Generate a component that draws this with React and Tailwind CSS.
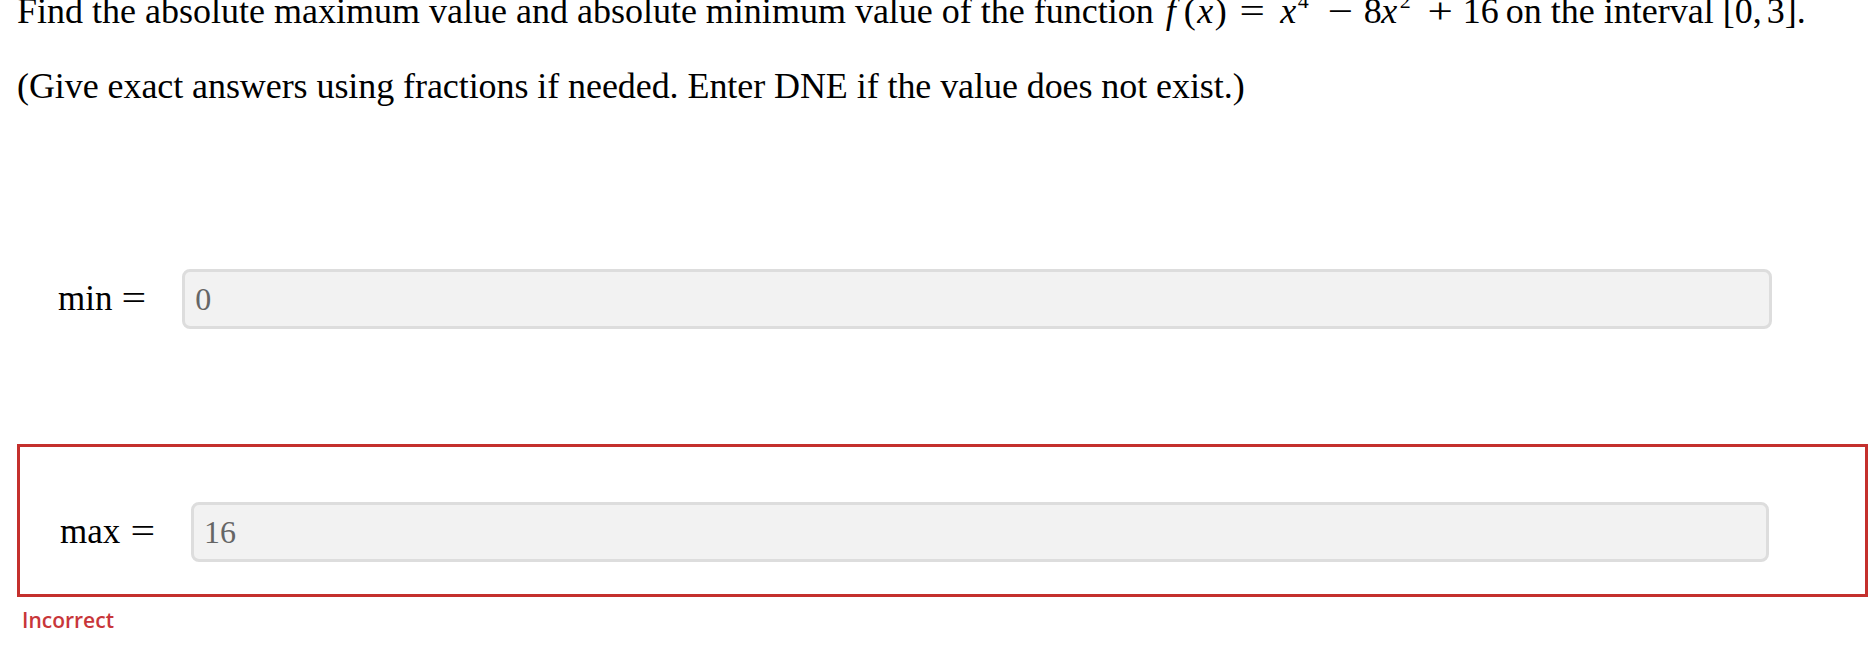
const serif = { fontFamily: '"Liberation Serif", "Times New Roman", serif' };

// one MathJax-like atom: fixed box, glyph centred in it
function Atom({ children, w, italic, op, className = "" }) {
  return (
    <span className={`inline-block text-center ${w} ${italic ? "italic" : ""} ${className}`}>
      {op ? <span className="inline-block scale-x-125">{children}</span> : children}
    </span>
  );
}

function Sup({ children, w, className = "" }) {
  return (
    <span className={`inline-block text-center ${w} ${className}`}>
      <span className="relative -top-[15px] text-[22px]">{children}</span>
    </span>
  );
}

function Field({ label, value, eqGap }) {
  return (
    <div className="flex items-center">
      <span className="text-[35px] leading-[52px] text-black whitespace-nowrap" style={serif}>
        {label}
        <span className={`inline-block scale-x-125 ${eqGap}`}>=</span>
      </span>
      <div className="ml-[38px] flex h-[60px] flex-1 items-center rounded-[8px] border-[3px] border-[#dddddd] bg-[#f2f2f2] px-[10px]">
        <span className="text-[32px] text-[#666666]" style={serif}>{value}</span>
      </div>
    </div>
  );
}

export default function App() {
  return (
    <div className="min-h-[650px] w-[1872px] overflow-hidden bg-white pl-[17px] pr-[4px]">
      {/* ── QUESTION ── */}
      <p className="-mt-[10px] h-[42px] text-[36px] leading-[42px] text-black whitespace-nowrap" style={serif}>
        Find the absolute maximum value and absolute minimum value of the function{" "}
        <span>
          <Atom w="w-[20px]" italic className="pl-[3px] text-left">f</Atom>
          <Atom w="w-[13px]" className="text-right">(</Atom>
          <Atom w="w-[19px]" italic>x</Atom>
          <Atom w="w-[12px]">)</Atom>
          <Atom w="w-[22px]" op className="ml-[14px]">=</Atom>
          <Atom w="w-[19px]" italic className="ml-[16px]">x</Atom>
          <Sup w="w-[11px]">4</Sup>
          <Atom w="w-[22px]" op className="ml-[20px]">−</Atom>
          <Atom w="w-[16px]" className="ml-[13px]">8</Atom>
          <Atom w="w-[19px]" italic>x</Atom>
          <Sup w="w-[10px]" className="ml-[1px]">2</Sup>
          <Atom w="w-[22px]" op className="ml-[19px]">+</Atom>
          <Atom w="w-[27px]" className="ml-[12px] mr-[7px]">16</Atom>
        </span>{" "}
        on the interval{" "}
        <span>
          [0,<span className="ml-[5px]">3</span>]
        </span>
        .
      </p>
      <p className="mt-[33px] h-[42px] text-[36px] leading-[42px] tracking-[-0.07px] text-black whitespace-nowrap" style={serif}>
        (Give exact answers using fractions if needed. Enter DNE if the value does not exist.)
      </p>

      {/* ── MIN ── */}
      <div className="mt-[162px] pl-[41px] pr-[96px]">
        <Field label="min" value="0" eqGap="ml-[12px]" />
      </div>

      {/* ── MAX (incorrect) ── */}
      <div className="mt-[115px] border-[3px] border-[#c4302d] pl-[40px] pr-[96px] pt-[55px] pb-[32px]">
        <Field label="max" value="16" eqGap="ml-[13px]" />
      </div>
      <p
        className="mt-[9px] pl-[5px] text-[21px] leading-[28px] font-semibold text-[#c8363a]"
        style={{ fontFamily: '"Open Sans", "Noto Sans", sans-serif' }}
      >
        Incorrect
      </p>
    </div>
  );
}
